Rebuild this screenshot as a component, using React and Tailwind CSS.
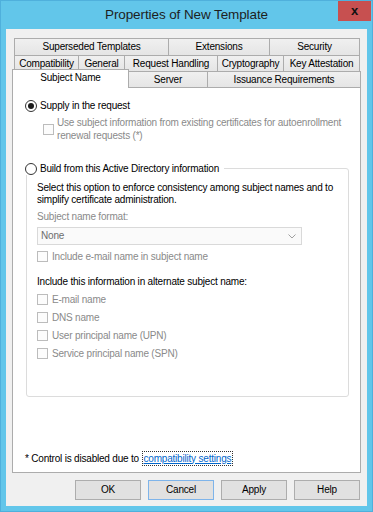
import React from "react";

// Small Win8-style controls
function Radio({ checked }) {
  return (
    <span className="flex h-[12px] w-[12px] shrink-0 items-center justify-center rounded-full border border-[#333333] bg-white">
      {checked && <span className="h-[6px] w-[6px] rounded-full bg-[#1a1a1a]" />}
    </span>
  );
}

function Box() {
  return <span className="h-[11px] w-[11px] shrink-0 border border-[#bcbcbc] bg-[#fcfcfc]" />;
}

function Check({ label }) {
  return (
    <div className="mt-[5px] flex h-[13px] items-center gap-[4px] text-[#8a8a8a]">
      <Box />
      <span>{label}</span>
    </div>
  );
}

function Tab({ label, w, first }) {
  return (
    <div
      className={`flex h-full items-center justify-center border-x border-t border-[#acacac] bg-gradient-to-b from-[#f0f0f0] to-[#e5e5e5] ${
        first ? "" : "-ml-px"
      }`}
      style={{ width: w }}
    >
      {label}
    </div>
  );
}

function Button({ label, focus }) {
  return (
    <button
      className={`flex h-[20px] w-[66px] items-center justify-center border bg-[#e1e1e1] ${
        focus ? "border-[#7eb4ea]" : "border-[#adadad]"
      }`}
    >
      {label}
    </button>
  );
}

export default function App() {
  return (
    <div className="flex h-[512px] w-[373px] flex-col border border-[#4fb0dc] bg-[#62c6ea] font-['Liberation_Sans',Arial,sans-serif] text-[10px] leading-[12px] tracking-[-0.2px] text-black">
      {/* Title bar */}
      <div className="relative flex h-[28px] shrink-0 items-center justify-center">
        <span className="text-[13.5px] tracking-[-0.1px] text-[#1e1e1e]">Properties of New Template</span>
        <div className="absolute right-[1px] top-0 flex h-[20px] w-[33px] items-center justify-center bg-[#c75050] text-[13px] font-bold text-[#111]">
          x
        </div>
      </div>

      {/* Dialog body */}
      <div className="mx-[5px] mb-[5px] flex flex-1 flex-col bg-[#f0f0f0] pt-[9px]">
        {/* Tabs */}
        <div className="flex h-[17px] pl-[8px]">
          <Tab label="Superseded Templates" w={155} first />
          <Tab label="Extensions" w={102} />
          <Tab label="Security" w={91} />
        </div>
        <div className="flex h-[16px] pl-[8px]">
          <Tab label="Compatibility" w={65} first />
          <Tab label="General" w={47} />
          <Tab label="Request Handling" w={94} />
          <Tab label="Cryptography" w={67} />
          <Tab label="Key Attestation" w={77} />
        </div>
        <div className="flex h-[16px] items-end pl-[6px]">
          <div className="relative z-10 -mb-px flex h-[19px] w-[117px] items-start justify-center border-x border-t border-[#acacac] bg-white pt-[2px]">
            Subject Name
          </div>
          <div className="-ml-px h-full">
            <Tab label="Server" w={80} first />
          </div>
          <div className="-ml-px h-full">
            <Tab label="Issuance Requirements" w={154} first />
          </div>
        </div>

        {/* Panel */}
        <div className="ml-[6px] flex h-[386px] w-[349px] flex-col border border-[#acacac] bg-white pl-[12px]">
          <div className="mt-[11px] flex h-[13px] items-center gap-[3px]">
            <Radio checked />
            <span>Supply in the request</span>
          </div>
          <div className="ml-[18px] mt-[5px] flex items-center gap-[3px] leading-[12.5px] text-[#8a8a8a]">
            <Box />
            <span>
              Use subject information from existing certificates for autoenrollment
              <br />
              renewal requests (*)
            </span>
          </div>

          <fieldset className="ml-px mt-[20px] w-[323px] rounded-[3px] border border-[#dcdcdc] pb-[36px]">
            <legend className="-ml-[2px] flex h-[13px] items-center gap-[3px] pr-[5px]">
              <Radio />
              <span>Build from this Active Directory information</span>
            </legend>
            <div className="pl-[10px] pt-[7px]">
              <p>
                Select this option to enforce consistency among subject names and to
                <br />
                simplify certificate administration.
              </p>
              <p className="mt-[5px] text-[#8a8a8a]">Subject name format:</p>
              <div className="mt-[4px] flex h-[18px] w-[265px] items-center justify-between border border-[#d9d9d9] bg-[#fafafa] pl-[3px] pr-[5px] text-[#6d6d6d]">
                <span>None</span>
                <svg width="8" height="5" viewBox="0 0 8 5" fill="none">
                  <path d="M0.5 0.5 L4 4 L7.5 0.5" stroke="#a0a0a0" strokeWidth="1" />
                </svg>
              </div>
              <Check label="Include e-mail name in subject name" />
              <p className="mt-[13px]">Include this information in alternate subject name:</p>
              <Check label="E-mail name" />
              <Check label="DNS name" />
              <Check label="User principal name (UPN)" />
              <Check label="Service principal name (SPN)" />
            </div>
          </fieldset>

          <div className="mb-[6px] mt-auto flex h-[15px] items-center">
            <span>* Control is disabled due to&nbsp;</span>
            <span className="flex h-[15px] items-center border border-dotted border-[#333] px-px text-[#0066cc] underline">
              compatibility settings
            </span>
          </div>
        </div>

        {/* Buttons */}
        <div className="mt-[7px] flex justify-end gap-[7px] pr-[7px]">
          <Button label="OK" />
          <Button label="Cancel" focus />
          <Button label="Apply" />
          <Button label="Help" />
        </div>
      </div>
    </div>
  );
}
